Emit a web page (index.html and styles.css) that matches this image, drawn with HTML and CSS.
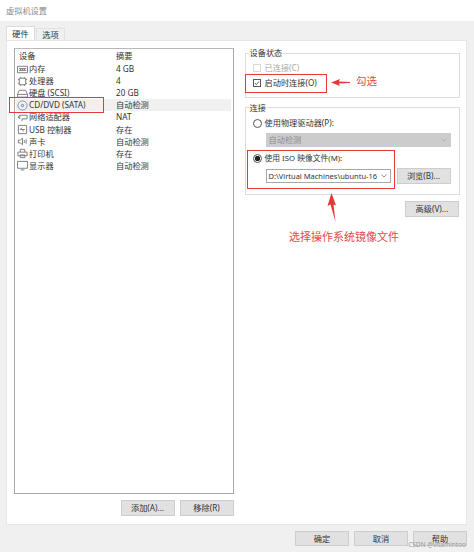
FILE: index.html
```html
<!DOCTYPE html>
<html lang="zh-CN">
<head>
<meta charset="utf-8">
<title>虚拟机设置</title>
<link rel="stylesheet" href="styles.css">
</head>
<body>
<div class="window">
  <div class="titlebar">虚拟机设置</div>
  <div class="tabs">
    <div class="tab active">硬件</div>
    <div class="tab">选项</div>
  </div>
  <div class="panel">
    <div class="left">
      <div class="list">
        <div class="row head"><span class="c1 plain">设备</span><span class="c2">摘要</span></div>
        <div class="row"><span class="c1"><svg class="ic" viewBox="0 0 12 12"><path d="M.5 2.500h11v7H.5zM2 5h8M2 7h8M4 5v2M6 5v2M8 5v2" /></svg>内存</span><span class="c2">4 GB</span></div>
        <div class="row"><span class="c1"><svg class="ic" viewBox="0 0 12 12"><path d="M2.500 2.500h7v7h-7zM1 4h1.500M1 8h1.500M9.500 4H11M9.500 8H11M4 1v1.500M8 1v1.500M4 9.500V11M8 9.500V11" /></svg>处理器</span><span class="c2">4</span></div>
        <div class="row"><span class="c1"><svg class="ic" viewBox="0 0 12 12"><path d="M2.500 2.500h7L11.500 7v3h-11V7zM.5 7h11" /></svg>硬盘 (SCSI)</span><span class="c2">20 GB</span></div>
        <div class="row selected"><span class="c1"><svg class="ic" viewBox="0 0 12 12"><circle cx="6" cy="6" r="5" stroke="#7f93a8"/><circle cx="6" cy="6" r="1.300" stroke="#3f7fc0"/></svg>CD/DVD (SATA)</span><span class="c2">自动检测</span></div>
        <div class="row"><span class="c1"><svg class="ic" viewBox="0 0 12 12"><path d="M3 3.500h8v4H5.500M1 5.500l2-2v4zM5.500 7.500v2.500" /></svg>网络适配器</span><span class="c2">NAT</span></div>
        <div class="row"><span class="c1"><svg class="ic" viewBox="0 0 12 12"><path d="M1.500 1.500h9v9h-9zM3.500 6h5M3.500 6l2-2M5.500 6l2 2" /></svg>USB 控制器</span><span class="c2">存在</span></div>
        <div class="row"><span class="c1"><svg class="ic" viewBox="0 0 12 12"><path d="M1.500 4.500h2L6 2.500v7l-2.500-2h-2zM8 4.500v3M10 3.500v5" /></svg>声卡</span><span class="c2">自动检测</span></div>
        <div class="row"><span class="c1"><svg class="ic" viewBox="0 0 12 12"><path d="M3.500 4.500v-3h5v3M1 4.500h10v4H1zM3.500 7.500h5v3h-5z" /></svg>打印机</span><span class="c2">存在</span></div>
        <div class="row"><span class="c1"><svg class="ic" viewBox="0 0 12 12"><path d="M.5 1.500h11v7.500H.5zM4 10.800h4" /></svg>显示器</span><span class="c2">自动检测</span></div>
      </div>
      <div class="btnrow">
        <div class="btn">添加(A)...</div>
        <div class="btn">移除(R)</div>
      </div>
    </div>
    <div class="right">
      <fieldset class="group status">
        <legend>设备状态</legend>
        <div class="opt disabled"><span class="check"></span>已连接(C)</div>
        <div class="opt"><span class="check on"><svg viewBox="0 0 9 9"><path d="M1.500 4.500l2 2.500 4-5"/></svg></span>启动时连接(O)</div>
      </fieldset>
      <fieldset class="group conn">
        <legend>连接</legend>
        <div class="opt"><span class="radio"></span>使用物理驱动器(P):</div>
        <div class="select gray"><span>自动检测</span><svg class="caret" viewBox="0 0 8 5"><path d="M.5.5L4 4 7.500.5"/></svg></div>
        <div class="opt iso"><span class="radio on"></span><span class="isolabel">使用 ISO 映像文件(M):</span></div>
        <div class="isorow">
          <div class="select white"><span class="path">D:\Virtual Machines\ubuntu-16</span><svg class="caret" viewBox="0 0 8 5"><path d="M.5.5L4 4 7.500.5"/></svg></div>
          <div class="btn">浏览(B)...</div>
        </div>
      </fieldset>
      <div class="advrow"><div class="btn">高级(V)...</div></div>
    </div>
    <div class="mark mark-cd"></div>
    <div class="mark mark-boot"></div>
    <div class="mark mark-iso"></div>
    <svg class="arrows" viewBox="0 0 474 552">
      <path d="M331 82.500l9-3.500-1 2.500 11 .5v1l-11 .5 1 2.500z"/>
      <path d="M331.500 193l4.500 12.500-2.500-1 2 17.500-5-17.500-3 1.500z"/>
    </svg>
    <div class="note note-a">勾选</div>
    <div class="note note-b">选择操作系统镜像文件</div>
  </div>
  <div class="footer">
    <div class="btn">确定</div>
    <div class="btn">取消</div>
    <div class="btn">帮助</div>
  </div>
  <div class="watermark">CSDN @vitamintoo</div>
</div>
</body>
</html>
```
FILE: styles.css
```css
* { box-sizing: border-box; }
html, body { margin: 0; padding: 0; }
body {
  width: 474px;
  height: 552px;
  overflow: hidden;
  background: #fff;
  font-family: "Noto Sans", "Noto Sans CJK SC", sans-serif;
  font-size: 8.2px;
  line-height: 12px;
  color: #333;
}
.window { position: relative; width: 474px; height: 552px; background: #f0f0f0; }
.titlebar {
  height: 21px;
  padding: 5px 0 0 6px;
  color: #8a8a8a;
  background: #fff;
}
.tabs {
  display: flex;
  width: 474px;
  height: 19px;
  padding: 5px 0 0 6px;
  background: #f0f0f0;
}
.tab {
  width: 29px;
  margin-top: 2px;
  text-align: center;
  background: #f0f0f0;
  border: 1px solid #e2e2e2;
  border-bottom: none;
}
.tab.active {
  margin-top: 0;
  margin-right: 1px;
  padding-top: 1px;
  background: #fff;
  border-color: #dcdcdc;
}
.panel {
  position: relative;
  display: flex;
  width: 461px;
  height: 485px;
  margin-left: 6px;
  background: #fff;
  box-shadow: inset 0 0 0 1px #e6e6e6;
  padding: 8px 7px 0 8px;
  gap: 11px;
}
.left { width: 220px; }
.list {
  height: 446px;
  padding: 1px 1px 0;
  border: 1px solid #a9a9a9;
  border-top-color: #b8b8b8;
  background: #fff;
}
.row {
  display: flex;
  height: 12.120px;
  line-height: 12.120px;
  white-space: nowrap;
  margin-right: 1px;
}
.head { height: 12px; margin-bottom: 1px; }
.c1 { display: flex; align-items: center; width: 100px; padding-left: 1px; }
.c1.plain { padding-left: 3px; }
.selected { background: #f0f0f0; }
.ic {
  flex: none;
  width: 11px;
  height: 11px;
  margin-right: 1px;
  fill: none;
  stroke: #777;
  stroke-width: 1;
}
.btnrow {
  display: flex;
  justify-content: flex-end;
  gap: 5px;
  margin-top: 6px;
}
.btn {
  flex: none;
  width: 54px;
  height: 16px;
  line-height: 14px;
  text-align: center;
  white-space: nowrap;
  background: #e1e1e1;
  border: 1px solid #cdcdcd;
}
.right { width: 216px; }
.group {
  margin: 0;
  padding: 0 5px 0 7px;
  border: 1px solid #dcdcdc;
  min-width: 0;
}
legend { padding: 0 1px; margin-left: -4px; line-height: 10px; }
.status { height: 49.500px; padding-top: 2.750px; }
.conn { height: 92.500px; margin-top: 5px; padding-top: 3.700px; }
.opt { display: flex; align-items: center; height: 14px; white-space: nowrap; }
.status .opt { height: 14.500px; }
.disabled { color: #a8a8a8; }
.check {
  flex: none;
  display: block;
  width: 8px;
  height: 8px;
  margin-right: 4px;
  border: 1px solid #d8d8d8;
}
.check.on { border-color: #555; }
.check svg { display: block; width: 6px; height: 6px; fill: none; stroke: #333; stroke-width: 1.100; }
.radio {
  flex: none;
  width: 9px;
  height: 9px;
  margin-right: 3px;
  border: 1px solid #555;
  border-radius: 50%;
  background: #fff;
}
.radio.on { background: radial-gradient(circle, #222 0 2.500px, #fff 3px); }
.select {
  display: flex;
  align-items: center;
  justify-content: space-between;
  height: 14px;
  padding: 0 3px 0 2px;
  white-space: nowrap;
}
.gray {
  width: 185px;
  margin: 3px 0 0 13px;
  color: #8d8d8d;
  background: #cccccc;
  border: 1px solid #cccccc;
}
.iso { margin-top: 4px; }
.isolabel { font-size: 7.800px; }
.isorow {
  display: flex;
  align-items: center;
  gap: 6px;
  margin: 3px 0 0 13px;
}
.white {
  width: 125px;
  background: #fff;
  border: 1px solid #a8a8a8;
}
.path { font-size: 7.500px; }
.caret { flex: none; width: 6px; height: 4px; fill: none; stroke: #666; stroke-width: 1; }
.gray .caret { stroke: #aaa; }
.advrow { display: flex; justify-content: flex-end; margin-top: 6px; }
.advrow .btn { margin-right: 1px; }
.mark { position: absolute; border: 1.500px solid #e5383b; }
.mark-cd { left: 3px; top: 57px; width: 95px; height: 16px; }
.mark-boot { left: 239px; top: 34px; width: 82px; height: 19px; }
.mark-iso { left: 241px; top: 110px; width: 148px; height: 39px; }
.arrows { position: absolute; left: -6px; top: -40px; width: 474px; height: 552px; fill: #e5383b; pointer-events: none; }
.note { position: absolute; color: #e5484a; white-space: nowrap; }
.note-a { left: 350px; top: 35px; font-size: 10.500px; }
.note-b { left: 283px; top: 190px; font-size: 11px; line-height: 13px; }
.footer {
  display: flex;
  justify-content: flex-end;
  gap: 5px;
  width: 474px;
  padding: 6px 7px 0 0;
}
.footer .btn { height: 15px; line-height: 13px; }
.watermark {
  position: absolute;
  right: 8px;
  top: 540px;
  font-size: 6.500px;
  line-height: 9px;
  color: #9a9a9a;
}
```
